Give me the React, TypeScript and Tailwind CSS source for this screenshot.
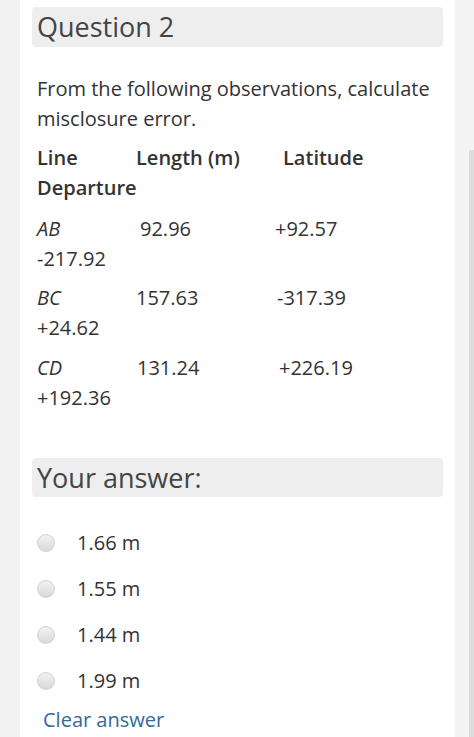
import React from 'react'

const font = { fontFamily: '"Open Sans", "Liberation Sans", sans-serif' }

const options = ['1.66 m', '1.55 m', '1.44 m', '1.99 m']

function Radio() {
  return (
    <span
      className="w-[18px] h-[18px] rounded-full border border-[#d2d2d2] bg-gradient-to-b from-[#f2f2f2] to-[#d9d9d9] shrink-0"
      aria-hidden="true"
    />
  )
}

export default function App() {
  return (
    <div className="w-[474px] h-[737px] overflow-hidden flex bg-[#f3f3f3]" style={font}>
      {/* left gutter */}
      <div className="w-[20px] shrink-0 bg-[#f2f2f2]" />

      {/* card */}
      <div className="w-[435px] shrink-0 bg-white px-[12px] pt-[7px] text-[#333]">
        <div className="h-[40px] rounded-[4px] bg-[#eeeeee] pl-[5px] text-[27px] leading-[40px] text-[#444]">
          Question 2
        </div>

        <div className="pl-[5px] mt-[27px] text-[20px] leading-[30px]">
          <p>
            From the following observations, calculate
            <br />
            misclosure error.
          </p>

          {/* table header */}
          <div className="mt-[9px] font-semibold">
            <div className="flex">
              <span className="w-[99px]">Line</span>
              <span className="w-[147px]">Length (m)</span>
              <span>Latitude</span>
            </div>
            <div>Departure</div>
          </div>

          <div className="mt-[11px]">
            <div className="flex">
              <span className="w-[103px] italic">AB</span>
              <span className="w-[135px]">92.96</span>
              <span>+92.57</span>
            </div>
            <div>-217.92</div>
          </div>

          <div className="mt-[9px]">
            <div className="flex">
              <span className="w-[99px] italic">BC</span>
              <span className="w-[141px]">157.63</span>
              <span>-317.39</span>
            </div>
            <div>+24.62</div>
          </div>

          <div className="mt-[10px]">
            <div className="flex">
              <span className="w-[100px] italic">CD</span>
              <span className="w-[142px]">131.24</span>
              <span>+226.19</span>
            </div>
            <div>+192.36</div>
          </div>
        </div>

        <div className="mt-[45px] h-[39px] rounded-[4px] bg-[#eeeeee] pl-[5px] text-[27px] leading-[39px] text-[#444]">
          Your answer:
        </div>

        <ul className="mt-[31px] pl-[5px] flex flex-col gap-[16px] text-[20px] leading-[30px]">
          {options.map((o) => (
            <li key={o} className="flex items-center gap-[22px]">
              <Radio />
              <span>{o}</span>
            </li>
          ))}
        </ul>

        <div className="mt-[9px] pl-[11px] text-[20px] leading-[30px] text-[#34699a]">
          Clear answer
        </div>
      </div>

      {/* right gutter with scrollbar */}
      <div className="flex-1 flex bg-[#f4f4f4]">
        <div className="flex-1" />
        <div className="w-[5px] flex flex-col">
          <div className="h-[150px]" />
          <div className="flex-1 bg-[#dcdcdc]" />
        </div>
      </div>
    </div>
  )
}
